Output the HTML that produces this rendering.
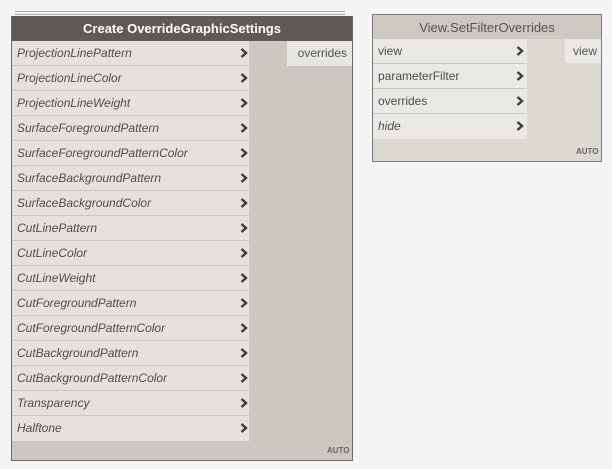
<!DOCTYPE html>
<html><head><style>
body{margin:0;width:612px;height:469px;background:#f5f5f5;position:relative;overflow:hidden;font-family:"Liberation Sans",sans-serif;}
.a{position:absolute;}
.row{position:absolute;height:24px;border-bottom:1px solid #cbc7c1;font-size:12px;line-height:24px;color:#4d4d4d;padding-left:5px;box-sizing:border-box;}
.row i{font-style:italic;}
.chev{position:absolute;top:7px;width:8px;height:10px;}
</style></head><body>
<div class="a" style="left:15px;top:11px;width:330px;height:2px;border-top:1px solid #aaa;border-bottom:1px solid #aaa;"></div>
<div class="a" style="left:11px;top:16px;width:340px;height:443px;background:#ccc8c1;border:1px solid #6b6b6b;"></div>
<div class="a" style="left:12px;top:16px;width:340px;height:25px;background:#5e5b57;color:#fff;font-weight:bold;font-size:13px;text-align:center;line-height:26px;">Create OverrideGraphicSettings</div>
<div class="a" style="left:287px;top:41px;width:65px;height:25px;background:#e8e6e2;color:#555;font-size:12px;line-height:25px;text-align:right;padding-right:5px;box-sizing:border-box;">overrides</div>
<div class="a" style="left:327px;top:446px;font-size:8px;font-weight:bold;color:#666;">AUTO</div>
<div id="L"></div>

<div class="a" style="left:372px;top:14px;width:228px;height:146px;background:#dcd9d3;border:1px solid #7a7a7a;"></div>
<div class="a" style="left:373px;top:15px;width:228px;height:24px;background:#cdc9c2;color:#555;font-size:13px;text-align:center;line-height:25px;">View.SetFilterOverrides</div>
<div class="a" style="left:565px;top:39px;width:36px;height:24px;background:#ebe9e5;color:#555;font-size:12px;line-height:25px;text-align:right;padding-right:4px;box-sizing:border-box;">view</div>
<div class="a" style="left:576px;top:147px;font-size:8px;font-weight:bold;color:#666;">AUTO</div>
<div id="R"></div>
<script>
function chev(x){return '<svg class="chev" style="left:'+x+'px" viewBox="0 0 8 10"><path d="M1.5 1 L6 5 L1.5 9" fill="none" stroke="#3d3d3d" stroke-width="2.4"/></svg>';}
var L=["ProjectionLinePattern","ProjectionLineColor","ProjectionLineWeight","SurfaceForegroundPattern","SurfaceForegroundPatternColor","SurfaceBackgroundPattern","SurfaceBackgroundColor","CutLinePattern","CutLineColor","CutLineWeight","CutForegroundPattern","CutForegroundPatternColor","CutBackgroundPattern","CutBackgroundPatternColor","Transparency","Halftone"];
var h="";L.forEach(function(t,i){h+='<div class="row" style="left:12px;top:'+(41+i*25)+'px;width:237px;height:25px;background:#e5e2dd;'+(i==15?'border-bottom:none;':'')+'"><i>'+t+'</i>'+chev(228)+'</div>';});
document.getElementById("L").innerHTML=h;
var R=[["view",0],["parameterFilter",0],["overrides",0],["hide",1]];h="";
R.forEach(function(t,i){h+='<div class="row" style="left:373px;top:'+(39+i*25)+'px;width:154px;height:25px;background:#ebe9e5;'+(i==3?'border-bottom:none;':'')+'">'+(t[1]?'<i>'+t[0]+'</i>':t[0])+chev(143)+'</div>';});
document.getElementById("R").innerHTML=h;
</script>
</body></html>
